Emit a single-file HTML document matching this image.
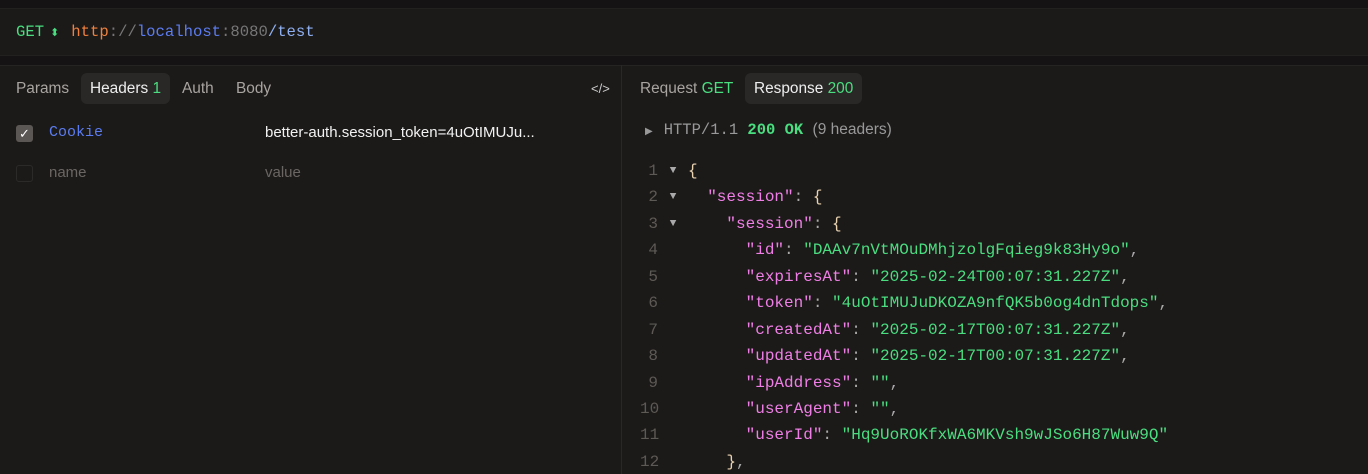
<!DOCTYPE html>
<html><head><meta charset="utf-8"><style>
*{margin:0;padding:0;box-sizing:border-box}
html,body{width:1368px;height:474px;overflow:hidden}
body{background:#151313;font-family:"Liberation Sans",sans-serif;color:#ddd;position:relative}
.mono{font-family:"Liberation Mono",monospace}
.bar{position:absolute;left:0;top:8px;width:1368px;height:48px;background:#1c1a19;border-top:1px solid #232120;border-bottom:1px solid #232120}
.bar .t{position:absolute;left:16px;top:14px;font-size:15.6px;white-space:pre}
.panel{position:absolute;left:0;top:65px;width:1368px;height:409px;background:#1c1a19;border-top:1px solid #262423}
.div{position:absolute;left:621px;top:65px;width:1px;height:409px;background:#2a2827}
.tab{position:absolute;top:73px;height:31px;line-height:31px;font-size:15.4px;color:#a8a4a0;padding:0 8px}
.tab.on{background:#2a2827;border-radius:6px;color:#eee;padding:0 9px}
.g{color:#4ade80}
.row{position:absolute;font-size:15px}
.code{position:absolute;left:640px;top:158px;font-size:16px}
.code div{height:26.45px;line-height:26px;white-space:pre}
.ln{color:#5d5955;display:inline-block;width:18px;text-align:right}
.ar{color:#aaa;display:inline-block;width:30px;font-size:11px;text-align:center;vertical-align:top}
.k{color:#ef7fe6}.p{color:#aaa}.s{color:#4ade80}.b{color:#e9d3b0}
</style></head><body>
<div class="bar"><div class="t mono"><span style="color:#4ade80">GET</span><span style="color:#4ade80;font-size:11px;margin-left:6px">⬍</span><span style="color:#f0803c;margin-left:12px">http</span><span style="color:#777">://</span><span style="color:#5b7cf0">localhost</span><span style="color:#777">:8080</span><span style="color:#8fb0f0">/test</span></div></div>
<div class="panel"></div>
<div class="div"></div>
<div class="tab" style="left:8px">Params</div>
<div class="tab on" style="left:81px">Headers <span class="g">1</span></div>
<div class="tab" style="left:174px">Auth</div>
<div class="tab" style="left:228px">Body</div>
<div class="tab" style="left:583px;font-size:13px;color:#ccc">&lt;/&gt;</div>
<div class="tab" style="left:632px">Request <span class="g">GET</span></div>
<div class="tab on" style="left:745px">Response <span class="g">200</span></div>
<div style="position:absolute;left:16px;top:125px;width:17px;height:17px;border-radius:3px;background:#5a5755;color:#fff;font-size:13px;text-align:center;line-height:17px">✓</div>
<div class="row mono" style="left:49px;top:124px;color:#5b7cf0">Cookie</div>
<div class="row" style="left:265px;top:124px;color:#f2f2f2">better-auth.session_token=4uOtIMUJu...</div>
<div style="position:absolute;left:16px;top:165px;width:17px;height:17px;border-radius:3px;border:1px solid #2c2a29"></div>
<div class="row" style="left:49px;top:164px;color:#6a6663">name</div>
<div class="row" style="left:265px;top:164px;color:#6a6663">value</div>
<div class="row mono" style="left:645px;top:121px;font-size:15.5px;color:#999;white-space:pre"><span style="font-size:10px;margin-right:11px">▶</span>HTTP/1.1 <b class="g">200 OK</b> <span style="font-family:'Liberation Sans'">(9 headers)</span></div>
<div class="code mono"><div><span class="ln">1</span><span class="ar">▼</span><span class="b">{</span></div><div><span class="ln">2</span><span class="ar">▼</span>  <span class="k">"session"</span><span class="p">: </span><span class="b">{</span></div><div><span class="ln">3</span><span class="ar">▼</span>    <span class="k">"session"</span><span class="p">: </span><span class="b">{</span></div><div><span class="ln">4</span><span class="ar"> </span>      <span class="k">"id"</span><span class="p">: </span><span class="s">"DAAv7nVtMOuDMhjzolgFqieg9k83Hy9o"</span><span class="p">,</span></div><div><span class="ln">5</span><span class="ar"> </span>      <span class="k">"expiresAt"</span><span class="p">: </span><span class="s">"2025-02-24T00:07:31.227Z"</span><span class="p">,</span></div><div><span class="ln">6</span><span class="ar"> </span>      <span class="k">"token"</span><span class="p">: </span><span class="s">"4uOtIMUJuDKOZA9nfQK5b0og4dnTdops"</span><span class="p">,</span></div><div><span class="ln">7</span><span class="ar"> </span>      <span class="k">"createdAt"</span><span class="p">: </span><span class="s">"2025-02-17T00:07:31.227Z"</span><span class="p">,</span></div><div><span class="ln">8</span><span class="ar"> </span>      <span class="k">"updatedAt"</span><span class="p">: </span><span class="s">"2025-02-17T00:07:31.227Z"</span><span class="p">,</span></div><div><span class="ln">9</span><span class="ar"> </span>      <span class="k">"ipAddress"</span><span class="p">: </span><span class="s">""</span><span class="p">,</span></div><div><span class="ln">10</span><span class="ar"> </span>      <span class="k">"userAgent"</span><span class="p">: </span><span class="s">""</span><span class="p">,</span></div><div><span class="ln">11</span><span class="ar"> </span>      <span class="k">"userId"</span><span class="p">: </span><span class="s">"Hq9UoROKfxWA6MKVsh9wJSo6H87Wuw9Q"</span></div><div><span class="ln">12</span><span class="ar"> </span>    <span class="b">}</span><span class="p">,</span></div></div>
</body></html>
